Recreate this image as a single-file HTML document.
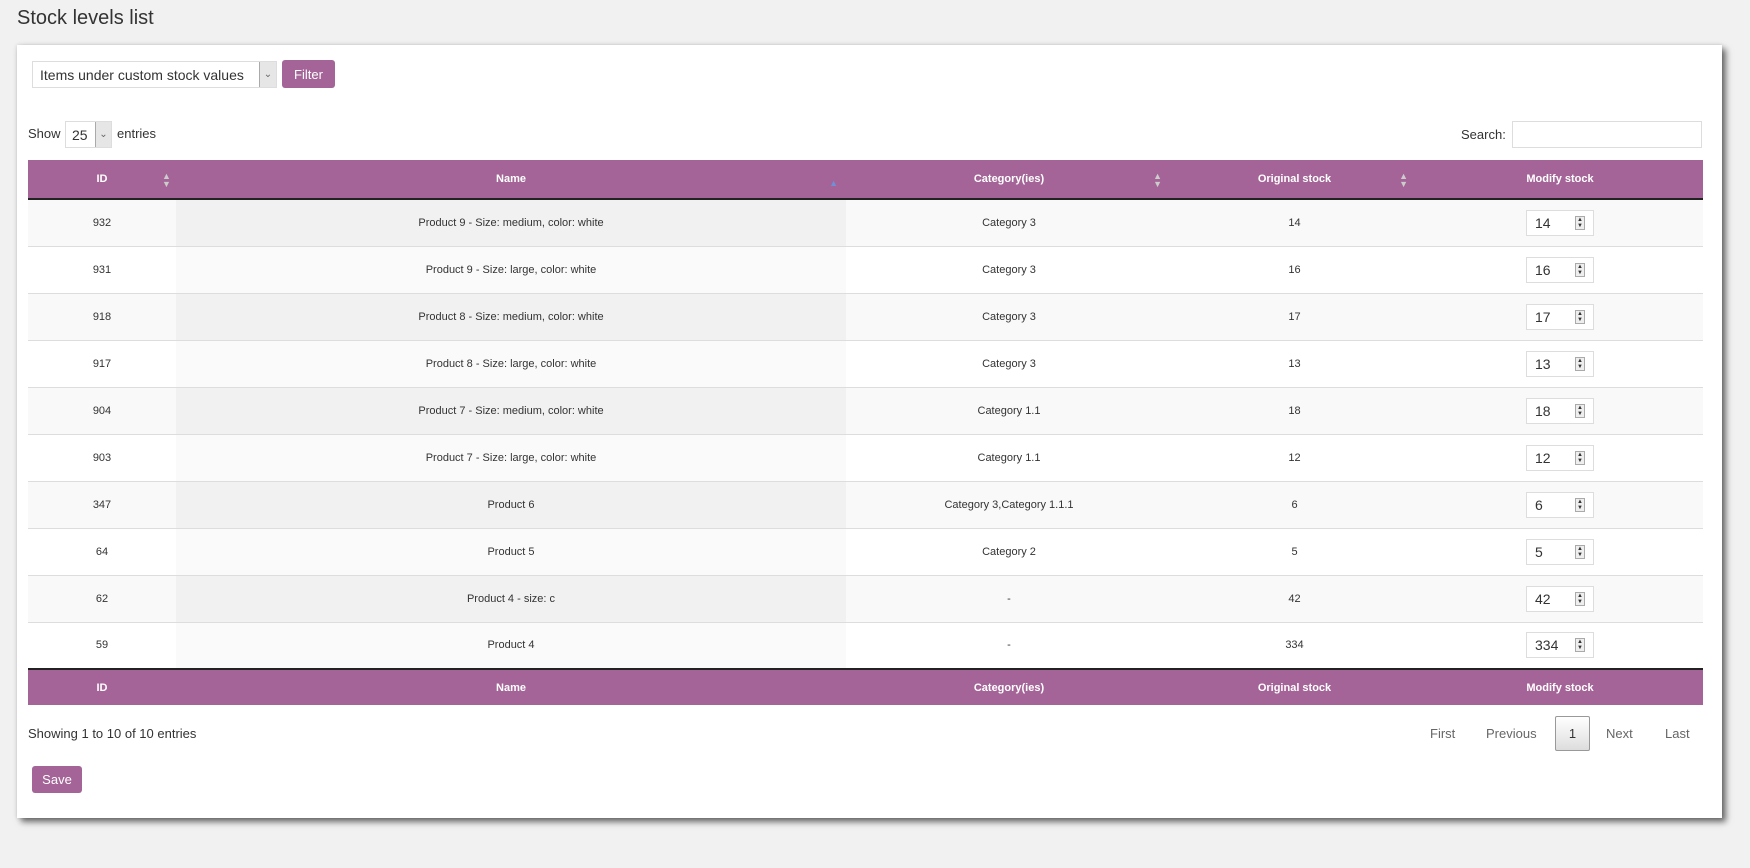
<!DOCTYPE html>
<html><head><meta charset="utf-8"><style>
*{box-sizing:border-box;margin:0;padding:0}
body{width:1750px;height:868px;background:#f1f1f1;font-family:"Liberation Sans",sans-serif;color:#444;position:relative;overflow:hidden}
.abs{position:absolute}
h1{position:absolute;left:17px;top:7px;font-size:20px;font-weight:normal;color:#333}
.card{left:17px;top:45px;width:1705px;height:773px;background:#fff;box-shadow:4px 4px 6px rgba(0,0,0,.55),0 0 4px rgba(0,0,0,.15)}
.sel{border:1px solid #ddd;background:#fff;font-size:14px;color:#333;display:flex;align-items:center}
.arr{position:absolute;right:0;top:0;bottom:0;border-left:1px solid #aaa;background:#e6e6e6;display:flex;align-items:center;justify-content:center;font-size:10px;color:#666}
.btn{background:#a46497;color:#fff;border-radius:3px;font-size:13px;display:flex;align-items:center;justify-content:center}
table{position:absolute;left:28px;top:160px;width:1675px;border-collapse:collapse;font-size:11px}
th{background:#a46497;color:#fff;font-weight:bold;font-size:11px;height:39px;text-align:center;position:relative}
thead th{border-bottom:2px solid #222}
tfoot th{height:36px;border-top:2px solid #222}
td{height:47px;text-align:center;border-top:1px solid #ddd;color:#333}
tbody tr:first-child td{border-top:none}
tr.o td{background:#f9f9f9}tr.o td.s{background:#f1f1f1}
tr.e td{background:#fff}tr.e td.s{background:#fafafa}
.si{position:absolute;top:12px;font-size:9px;line-height:8px;color:#ccc}
.num{display:inline-block;width:68px;height:26px;border:1px solid #ddd;text-align:left;padding-left:8px;font-size:14px;line-height:24px;position:relative;vertical-align:middle;background:#fff}
.num i{position:absolute;right:8px;top:5px;width:10px;height:14px;border:1px solid #aaa;background:#eee;font-style:normal;font-size:6px;line-height:6px;text-align:center;color:#333}
.pg{font-size:13px;color:#666;top:726px}
</style></head><body>
<h1>Stock levels list</h1>
<div class="abs card"></div>
<div class="abs sel" style="left:32px;top:61px;width:245px;height:27px;padding-left:7px">Items under custom stock values<div class="arr" style="width:17px">&#8964;</div></div>
<div class="abs btn" style="left:282px;top:60px;width:53px;height:28px">Filter</div>
<div class="abs" style="left:28px;top:126px;font-size:13px;color:#333">Show</div>
<div class="abs sel" style="left:65px;top:121px;width:47px;height:27px;padding-left:6px">25<div class="arr" style="width:16px">&#8964;</div></div>
<div class="abs" style="left:117px;top:126px;font-size:13px;color:#333">entries</div>
<div class="abs" style="left:1461px;top:127px;font-size:13px;color:#333">Search:</div>
<div class="abs" style="left:1512px;top:121px;width:190px;height:27px;border:1px solid #ddd"></div>
<table>
<colgroup><col style="width:148px"><col style="width:670px"><col style="width:326px"><col style="width:245px"><col style="width:286px"></colgroup>
<thead><tr><th>ID<span class="si" style="left:134px">▲<br>▼</span></th><th>Name<span class="si" style="right:8px;top:19px;color:#6f8fd8">▲</span></th><th>Category(ies)<span class="si" style="right:10px">▲<br>▼</span></th><th>Original stock<span class="si" style="right:9px">▲<br>▼</span></th><th>Modify stock</th></tr></thead>
<tbody>
<tr class="o"><td>932</td><td class="s">Product 9 - Size: medium, color: white</td><td>Category 3</td><td>14</td><td><span class="num">14<i>▲<br>▼</i></span></td></tr>
<tr class="e"><td>931</td><td class="s">Product 9 - Size: large, color: white</td><td>Category 3</td><td>16</td><td><span class="num">16<i>▲<br>▼</i></span></td></tr>
<tr class="o"><td>918</td><td class="s">Product 8 - Size: medium, color: white</td><td>Category 3</td><td>17</td><td><span class="num">17<i>▲<br>▼</i></span></td></tr>
<tr class="e"><td>917</td><td class="s">Product 8 - Size: large, color: white</td><td>Category 3</td><td>13</td><td><span class="num">13<i>▲<br>▼</i></span></td></tr>
<tr class="o"><td>904</td><td class="s">Product 7 - Size: medium, color: white</td><td>Category 1.1</td><td>18</td><td><span class="num">18<i>▲<br>▼</i></span></td></tr>
<tr class="e"><td>903</td><td class="s">Product 7 - Size: large, color: white</td><td>Category 1.1</td><td>12</td><td><span class="num">12<i>▲<br>▼</i></span></td></tr>
<tr class="o"><td>347</td><td class="s">Product 6</td><td>Category 3,Category 1.1.1</td><td>6</td><td><span class="num">6<i>▲<br>▼</i></span></td></tr>
<tr class="e"><td>64</td><td class="s">Product 5</td><td>Category 2</td><td>5</td><td><span class="num">5<i>▲<br>▼</i></span></td></tr>
<tr class="o"><td>62</td><td class="s">Product 4 - size: c</td><td>-</td><td>42</td><td><span class="num">42<i>▲<br>▼</i></span></td></tr>
<tr class="e"><td>59</td><td class="s">Product 4</td><td>-</td><td>334</td><td><span class="num">334<i>▲<br>▼</i></span></td></tr>
</tbody>
<tfoot><tr><th>ID</th><th>Name</th><th>Category(ies)</th><th>Original stock</th><th>Modify stock</th></tr></tfoot>
</table>
<div class="abs" style="left:28px;top:726px;font-size:13px;color:#333">Showing 1 to 10 of 10 entries</div>
<div class="abs pg" style="left:1430px">First</div>
<div class="abs pg" style="left:1486px">Previous</div>
<div class="abs" style="left:1555px;top:716px;width:35px;height:35px;border:1px solid #999;border-radius:2px;background:linear-gradient(#fff,#ddd);font-size:13px;color:#333;text-align:center;line-height:33px">1</div>
<div class="abs pg" style="left:1606px">Next</div>
<div class="abs pg" style="left:1665px">Last</div>
<div class="abs btn" style="left:32px;top:766px;width:50px;height:27px">Save</div>
</body></html>
